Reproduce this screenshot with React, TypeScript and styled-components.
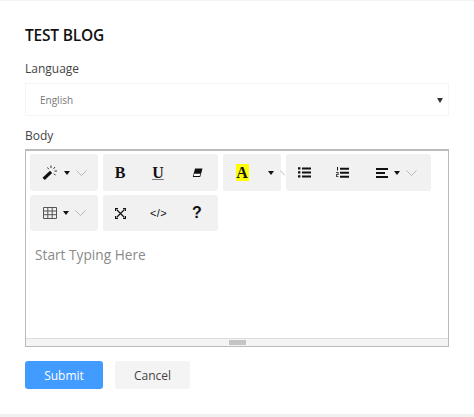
import React from 'react';
import styled, {createGlobalStyle} from 'styled-components';

const GlobalStyle = createGlobalStyle`
    html, body {
        margin: 0;
        padding: 0;
        background: #fff;
        font-family: "Open Sans", "Liberation Sans", sans-serif;
    }
`

const Page = styled.div`
    width: 474px;
    height: 417px;
    box-sizing: border-box;
    overflow: hidden;
    border-top: 1px solid #f3f3f3;
    border-bottom: 3px solid #f0f0f0;
    padding: 25px 25px 0 25px;
`

const Title = styled.h1`
    margin: 0 0 15px;
    height: 19px;
    line-height: 19px;
    font-size: 15.5px;
    font-weight: 600;
    letter-spacing: -0.2px;
    color: #111;
`

const Label = styled.label`
    display: block;
    height: 17px;
    line-height: 17px;
    font-size: 12px;
    color: #444;
`

const SelectBox = styled.div`
    display: flex;
    align-items: center;
    justify-content: space-between;
    box-sizing: border-box;
    height: 33px;
    margin: 6px 0 11px;
    padding: 1px 5px 0 14px;
    border: 1px solid #f5f5f5;
    font-size: 10px;
    color: #777;
`

const Caret = styled.span`
    width: 0;
    height: 0;
    border-left: 3px solid transparent;
    border-right: 3px solid transparent;
    border-top: 5px solid #333;
`

const Editor = styled.div`
    box-sizing: border-box;
    height: 198px;
    margin-top: 5px;
    display: flex;
    flex-direction: column;
    border: 1px solid #bbb;
    border-top-width: 2px;
`

const Toolbar = styled.div`
    display: flex;
    flex-wrap: wrap;
    gap: 4px 5px;
    padding: 3px 4px 0;
`

const Group = styled.div<{$width: number}>`
    display: flex;
    align-items: center;
    width: ${p => p.$width}px;
    height: 36.5px;
    background: #f1f1f1;
    border-radius: 3px;
`

const Tool = styled.button<{$width: number}>`
    flex: none;
    display: flex;
    align-items: center;
    justify-content: center;
    gap: 6px;
    box-sizing: border-box;
    width: ${p => p.$width}px;
    height: 100%;
    padding: 1px 0 0;
    border: 0;
    background: none;
    color: #111;
`

const Letter = styled.span<{$underline?: boolean}>`
    font-family: "Liberation Serif", serif;
    font-size: 16px;
    font-weight: 700;
    text-decoration: ${p => p.$underline ? 'underline' : 'none'};
    text-decoration-color: #777;
`

const Highlight = styled.span`
    display: block;
    width: 13px;
    height: 17px;
    line-height: 18px;
    text-align: center;
    background: #ffff00;
    font-family: "Liberation Serif", serif;
    font-size: 16px;
    font-weight: 700;
    color: #111;
`

const Code = styled.span`
    font-family: "Liberation Sans", sans-serif;
    font-size: 11px;
    font-weight: 400;
    letter-spacing: 0.3px;
    margin-left: 1px;
`

const Help = styled.span`
    font-family: "Liberation Sans", sans-serif;
    font-size: 16px;
    font-weight: 700;
`

const Drop = styled.span`
    flex: none;
    width: 0;
    height: 0;
    border-left: 3.5px solid transparent;
    border-right: 3.5px solid transparent;
    border-top: 4px solid #111;
`

const Placeholder = styled.div`
    flex: 1;
    padding: 14px 9px;
    font-size: 13.7px;
    line-height: 20px;
    color: #8a8a8a;
`

const StatusBar = styled.div`
    box-sizing: border-box;
    height: 8px;
    display: flex;
    align-items: center;
    justify-content: center;
    background: #f4f4f4;
    border-top: 1px solid #ddd;
`

const Grip = styled.span`
    width: 17px;
    height: 5px;
    background: #c4c4c4;
`

const Actions = styled.div`
    display: flex;
    gap: 12px;
    margin-top: 14px;
`

const PrimaryButton = styled.button`
    width: 78px;
    height: 28px;
    padding: 0;
    border: 0;
    border-radius: 3px;
    background: #429bff;
    color: #fff;
    font-family: inherit;
    font-size: 12px;
`

const CancelButton = styled.button`
    width: 75px;
    height: 28px;
    padding: 0;
    border: 0;
    border-radius: 3px;
    background: #f4f4f5;
    color: #444;
    font-family: inherit;
    font-size: 12px;
`

const Chevron = ({clip}: {clip?: boolean}) => (
    <svg width={clip ? 5 : 11} height="6" viewBox={clip ? '0 0 5 6' : '0 0 11 6'} fill="none" stroke="#aaa" strokeWidth="0.8" style={{flex: 'none'}}>
        <path d={clip ? 'M0 0.5 L5 5.5' : 'M0.5 0.5 L5.5 5.5 L10.5 0.5'}/>
    </svg>
)

const Wand = () => (
    <svg width="16" height="15" viewBox="0 0 16 15">
        <path d="M0.5 12.8 L8 5.8 L10.2 8 L2.8 15 Z" fill="#111"/>
        <path d="M9 0.5 V3 M13 2 L11.6 3.8 M5.5 2.5 L6.7 4.2 M15 6 H12.5 M13.5 10 L11.8 8.9" stroke="#333" strokeWidth="1"/>
    </svg>
)

const Eraser = () => (
    <svg width="11" height="10" viewBox="0 0 11 10">
        <path d="M3 0.5 H10.5 L8.2 9 H0.8 Z" fill="#111"/>
        <path d="M2.2 5.8 H8.4 L7.6 8 H1.8 Z" fill="#fff"/>
    </svg>
)

const TableIcon = () => (
    <svg width="14" height="12" viewBox="0 0 14 12" fill="none" stroke="#555" strokeWidth="1">
        <path d="M0.5 0.5 H13.5 V11.5 H0.5 Z M0.5 4 H13.5 M0.5 7.7 H13.5 M4.8 0.5 V11.5 M9.2 0.5 V11.5"/>
    </svg>
)

const Fullscreen = () => (
    <svg width="11" height="11" viewBox="0 0 11 11" fill="none" stroke="#111" strokeWidth="1.2">
        <path d="M2 2 L9 9 M9 2 L2 9"/>
        <path d="M0.5 3 V0.5 H3 M8 0.5 H10.5 V3 M0.5 8 V10.5 H3 M8 10.5 H10.5 V8" strokeWidth="1.4"/>
    </svg>
)

const BulletList = () => (
    <svg width="13" height="11" viewBox="0 0 13 11" fill="#111">
        <path d="M0 0.2 H2.4 V2.6 H0 Z M0 4.2 H2.4 V6.6 H0 Z M0 8.2 H2.4 V10.6 H0 Z M4 0.4 H13 V2.4 H4 Z M4 4.4 H13 V6.4 H4 Z M4 8.4 H13 V10.4 H4 Z"/>
    </svg>
)

const NumberList = () => (
    <svg width="13" height="12" viewBox="0 0 13 12" fill="#111">
        <path d="M1 0 H2 V3.5 H1 Z M0 5 H2.5 V8 H0.8 V9 H2.5 V9.8 H0 V7.2 H1.7 V5.8 H0 Z M4 0.8 H13 V2.8 H4 Z M4 4.8 H13 V6.8 H4 Z M4 8.8 H13 V10.8 H4 Z"/>
    </svg>
)

const AlignLeft = () => (
    <svg width="12" height="10" viewBox="0 0 12 10" fill="#111">
        <path d="M0 0 H12 V2 H0 Z M0 4 H9 V6 H0 Z M0 8 H12 V10 H0 Z"/>
    </svg>
)

class App extends React.Component {
    render() {
        return (
            <Page>
                <GlobalStyle/>
                <Title>TEST BLOG</Title>
                <Label>Language</Label>
                <SelectBox>
                    <span>English</span>
                    <Caret/>
                </SelectBox>
                <Label>Body</Label>
                <Editor>
                    <Toolbar>
                        <Group $width={68}>
                            <Tool $width={68}><Wand/><Drop/><Chevron/></Tool>
                        </Group>
                        <Group $width={115}>
                            <Tool $width={34}><Letter>B</Letter></Tool>
                            <Tool $width={42}><Letter $underline>U</Letter></Tool>
                            <Tool $width={36}><Eraser/></Tool>
                        </Group>
                        <Group $width={58}>
                            <Tool $width={38}><Highlight>A</Highlight></Tool>
                            <Tool $width={30}><Drop/><Chevron clip/></Tool>
                        </Group>
                        <Group $width={145}>
                            <Tool $width={36}><BulletList/></Tool>
                            <Tool $width={40}><NumberList/></Tool>
                            <Tool $width={69}><AlignLeft/><Drop/><Chevron/></Tool>
                        </Group>
                        <Group $width={68}>
                            <Tool $width={68}><TableIcon/><Drop/><Chevron/></Tool>
                        </Group>
                        <Group $width={115}>
                            <Tool $width={34}><Fullscreen/></Tool>
                            <Tool $width={42}><Code>&lt;/&gt;</Code></Tool>
                            <Tool $width={36}><Help>?</Help></Tool>
                        </Group>
                    </Toolbar>
                    <Placeholder>Start Typing Here</Placeholder>
                    <StatusBar><Grip/></StatusBar>
                </Editor>
                <Actions>
                    <PrimaryButton>Submit</PrimaryButton>
                    <CancelButton>Cancel</CancelButton>
                </Actions>
            </Page>
        );
    }
}

export default App;
